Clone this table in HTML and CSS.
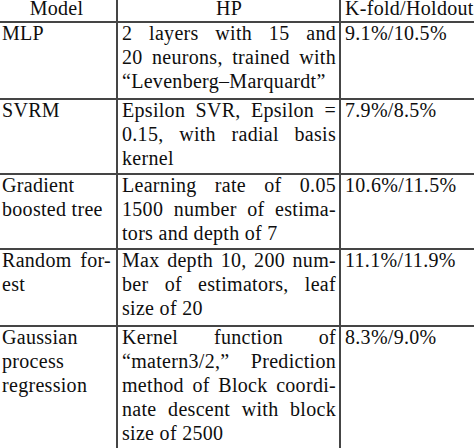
FILE: index.html
```html
<!DOCTYPE html>
<html>
<head>
<meta charset="utf-8">
<link rel="stylesheet" href="styles.css">
</head>
<body>
<div class="table">
  <div class="cell head c1">Model</div>
  <div class="cell head c2">HP</div>
  <div class="cell head c3">K-fold/Holdout</div>

  <div class="cell c1 r-tall"><div class="inner"><span class="l">MLP</span></div></div>
  <div class="cell c2 r-tall"><div class="inner">
    <span class="l j">2 layers with 15 and</span>
    <span class="l j">20 neurons, trained with</span>
    <span class="l">“Levenberg–Marquardt”</span>
  </div></div>
  <div class="cell c3 r-tall"><div class="inner"><span class="l">9.1%/10.5%</span></div></div>

  <div class="cell c1 r-short"><div class="inner"><span class="l">SVRM</span></div></div>
  <div class="cell c2 r-short"><div class="inner">
    <span class="l j">Epsilon SVR, Epsilon =</span>
    <span class="l j">0.15, with radial basis</span>
    <span class="l">kernel</span>
  </div></div>
  <div class="cell c3 r-short"><div class="inner"><span class="l">7.9%/8.5%</span></div></div>

  <div class="cell c1 r-short"><div class="inner">
    <span class="l">Gradient</span>
    <span class="l">boosted tree</span>
  </div></div>
  <div class="cell c2 r-short"><div class="inner">
    <span class="l j">Learning rate of 0.05</span>
    <span class="l j">1500 number of estima-</span>
    <span class="l">tors and depth of 7</span>
  </div></div>
  <div class="cell c3 r-short"><div class="inner"><span class="l">10.6%/11.5%</span></div></div>

  <div class="cell c1 r-tall"><div class="inner">
    <span class="l j">Random for-</span>
    <span class="l">est</span>
  </div></div>
  <div class="cell c2 r-tall"><div class="inner">
    <span class="l j">Max depth 10, 200 num-</span>
    <span class="l j">ber of estimators, leaf</span>
    <span class="l">size of 20</span>
  </div></div>
  <div class="cell c3 r-tall"><div class="inner"><span class="l">11.1%/11.9%</span></div></div>

  <div class="cell c1 r-last"><div class="inner">
    <span class="l">Gaussian</span>
    <span class="l">process</span>
    <span class="l">regression</span>
  </div></div>
  <div class="cell c2 r-last"><div class="inner">
    <span class="l j">Kernel function of</span>
    <span class="l j">“matern3/2,” Prediction</span>
    <span class="l j">method of Block coordi-</span>
    <span class="l j">nate descent with block</span>
    <span class="l">size of 2500</span>
  </div></div>
  <div class="cell c3 r-last"><div class="inner"><span class="l">8.3%/9.0%</span></div></div>
</div>
</body>
</html>
```

FILE: styles.css
```css
html, body {
  margin: 0;
  padding: 0;
  background: #ffffff;
  overflow: hidden;
}

body {
  font-family: "Liberation Serif", "Times New Roman", serif;
  font-size: 20px;
  letter-spacing: 0.3px;
  line-height: 24px;
  color: #0e0e0e;
}

.table {
  display: grid;
  grid-template-columns: 118px 223px 1fr;
  margin-top: -4px;
  width: 474px;
}

.cell {
  border-bottom: 2px solid #454545;
  box-sizing: border-box;
}

.c1 {
  border-right: 2px solid #454545;
  padding: 0 5px 0 2px;
}

.c2 {
  border-right: 2px solid #454545;
  padding: 0 3px 0 4px;
}

.c3 {
  padding: 0 0 0 4px;
  white-space: nowrap;
}

.head {
  padding-bottom: 1px;
  text-align: center;
}

.head.c3 {
  text-align: left;
}

.inner {
  margin-top: -2px;
}

.r-tall {
  padding-bottom: 5px;
}

.r-short {
  padding-bottom: 3px;
}

.r-last {
  padding-bottom: 10px;
  border-bottom: none;
}

.l {
  display: block;
  white-space: nowrap;
}

.l.j {
  text-align: justify;
  text-align-last: justify;
  white-space: normal;
}
```
